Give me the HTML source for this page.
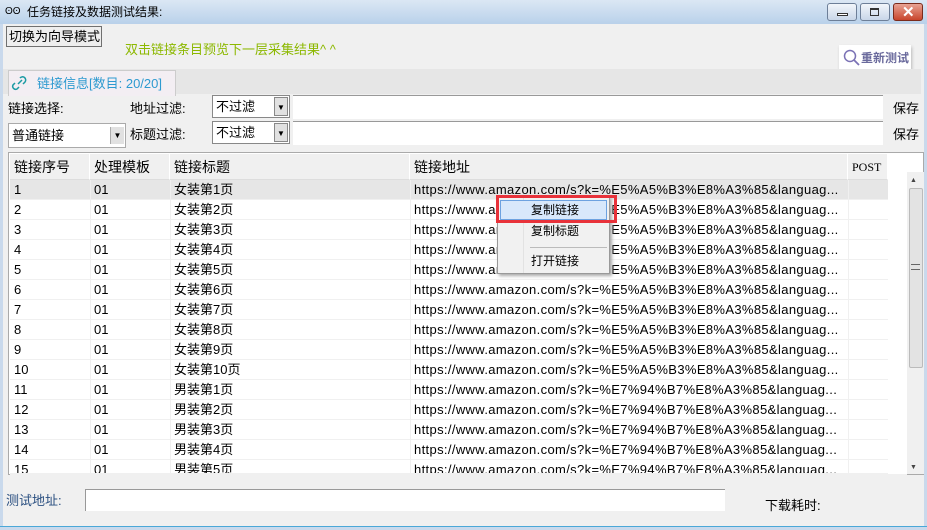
<!DOCTYPE html>
<html><head><meta charset="utf-8"><style>
*{box-sizing:border-box;margin:0;padding:0}
body{width:927px;height:530px;overflow:hidden;background:#f0f0f0;font-family:"Liberation Sans","Noto Sans CJK SC",sans-serif;font-size:13px;color:#000;position:relative}
.a{position:absolute;white-space:nowrap;line-height:16px}
.tb{left:0;top:0;width:927px;height:24px;background:linear-gradient(#dbe7f4,#b9d1ea)}
.wb{position:absolute;top:3px;height:18px;border:1px solid #6d7f98;border-radius:3px;background:linear-gradient(#f2f6fb,#c8d6e8)}
.cb{width:14px;height:16px;border-left:1px solid #acacac;background:#e1e1e1;}
.row{position:absolute;left:10px;width:878px;height:20px;border-bottom:1px solid #f0f0f0;background:#fff}
.row span{position:absolute;top:2px;font-size:13px;line-height:16px;white-space:nowrap}
.hd{position:absolute;top:154px;height:26px;background:#f0f0f0;border-right:1px solid #fff;border-bottom:1px solid #ddd;padding:4px 0 0 4px;font-size:14px;line-height:18px}
</style></head><body>
<div class="a tb"></div>
<div class="a" style="left:5px;top:4px;font-size:10px">ʘʘ</div>
<div class="a" style="left:27px;top:4px;font-size:12px">任务链接及数据测试结果:</div>
<div class="wb" style="left:827px;width:30px"><div style="position:absolute;left:9px;top:9px;width:11px;height:3px;border:1px solid #333;background:#fff"></div></div>
<div class="wb" style="left:860px;width:30px"><div style="position:absolute;left:9px;top:4px;width:9px;height:8px;border:1px solid #333;border-top-width:2px"></div></div>
<div class="wb" style="left:893px;width:30px;background:linear-gradient(#e8a393,#c8452c);border-color:#7a2b1c"><div style="position:absolute;left:8px;top:-1px;color:#fff;font-weight:bold;font-size:15px">✕</div></div>
<div class="a" style="left:0;top:24px;width:3px;height:506px;background:#c9d9ec"></div>
<div class="a" style="left:924px;top:24px;width:3px;height:506px;background:#c9d9ec"></div>
<div class="a" style="left:0;top:526px;width:927px;height:4px;background:#c9d9ec;border-top:1px solid #4aa8d8"></div>

<div class="a" style="left:6px;top:26px;width:96px;height:21px;border:1px solid #707070;background:#eee;font-size:13px;padding:2px 0 0 2px">切换为向导模式</div>
<div class="a" style="left:125px;top:42px;color:#8cb800;font-size:13px">双击链接条目预览下一层采集结果^ ^</div>
<div class="a" style="left:839px;top:45px;width:72px;height:25px;background:#fff;box-shadow:1px 2px 3px #bbb"><svg width="18" height="18" style="position:absolute;left:4px;top:4px"><circle cx="7" cy="7" r="5.5" fill="none" stroke="#7b72b5" stroke-width="1.5"/><line x1="11" y1="11" x2="16" y2="16" stroke="#7b72b5" stroke-width="1.8"/></svg><span style="position:absolute;left:22px;top:5px;font-size:12px;color:#6a6a9c;font-weight:bold">重新测试</span></div>

<div class="a" style="left:3px;top:69px;width:918px;height:25px;background:#e6e6e6"></div>
<div class="a" style="left:8px;top:70px;width:168px;height:26px;background:#f3eef3;border:1px solid #ccc;border-bottom:none"></div>
<svg class="a" style="left:11px;top:74px" width="18" height="18"><path d="M7 10 L11 6 M9 4 a3 3 0 0 1 5 4 l-2 2 M8 13 l-2 2 a3 3 0 0 1 -4 -4 l2 -2" stroke="#1b9aa3" stroke-width="1.5" fill="none"/></svg>
<div class="a" style="left:37px;top:76px;color:#2e9ad0;font-size:13px">链接信息[数目: 20/20]</div>

<div class="a" style="left:8px;top:101px">链接选择:</div>
<div class="a" style="left:130px;top:101px">地址过滤:</div>
<div class="a" style="left:130px;top:127px">标题过滤:</div>
<div class="a" style="left:8px;top:123px;width:118px;height:25px;background:#fff;border:1px solid #aaa;padding:4px 0 0 3px">普通链接<div class="cb" style="position:absolute;right:1px;top:3px;height:17px;font-size:8px;text-align:center;line-height:17px">▼</div></div>
<div class="a" style="left:212px;top:95px;width:78px;height:23px;background:#fff;border:1px solid #888;padding:3px 0 0 3px">不过滤<div class="cb" style="position:absolute;right:1px;top:1px;height:19px;font-size:8px;text-align:center;line-height:19px;border:1px solid #888">▼</div></div>
<div class="a" style="left:212px;top:121px;width:78px;height:23px;background:#fff;border:1px solid #888;padding:3px 0 0 3px">不过滤<div class="cb" style="position:absolute;right:1px;top:1px;height:19px;font-size:8px;text-align:center;line-height:19px;border:1px solid #888">▼</div></div>
<div class="a" style="left:293px;top:95px;width:590px;height:24px;background:#fff;border-top:1px solid #999"></div>
<div class="a" style="left:293px;top:121px;width:590px;height:24px;background:#fff;border-top:1px solid #999"></div>
<div class="a" style="left:893px;top:101px">保存</div>
<div class="a" style="left:893px;top:127px">保存</div>

<div class="a" style="left:8px;top:152px;width:916px;height:323px;background:#fff;border:1px solid #aaa"></div>
<div class="hd" style="left:10px;width:80px">链接序号</div>
<div class="hd" style="left:90px;width:80px">处理模板</div>
<div class="hd" style="left:170px;width:240px">链接标题</div>
<div class="hd" style="left:410px;width:438px">链接地址</div>
<div class="hd" style="left:848px;width:40px;font-family:'Liberation Serif',serif;font-size:12px;padding-top:4px">POST</div>

<div id="rows"></div>
<div class="a" style="left:10px;top:474px;width:897px;height:2px;background:#f0f0f0"></div>

<div class="a" style="left:907px;top:172px;width:17px;height:302px;background:#f0f0f0"></div>
<div class="a" style="left:910px;top:173px;font-size:7px;color:#444">▲</div>
<div class="a" style="left:909px;top:188px;width:14px;height:180px;background:#e3e3e3;border:1px solid #bbb;border-radius:2px"></div>
<div class="a" style="left:911px;top:264px;width:9px;height:6px;border-top:1px solid #666;border-bottom:1px solid #666"></div>
<div class="a" style="left:910px;top:460px;font-size:7px;color:#444">▼</div>

<div class="a" style="left:497px;top:196px;width:113px;height:78px;background:#f1f1f1;border:1px solid #999;box-shadow:2px 2px 3px #aaa"></div>
<div class="a" style="left:523px;top:197px;width:1px;height:76px;background:#e2e2e2"></div>
<div class="a" style="left:500px;top:200px;width:107px;height:20px;background:#d8e8fb;border:1px solid #6da2e0"></div>
<div class="a" style="left:496px;top:195px;width:121px;height:28px;border:3px solid #e8323a"></div>
<div class="a" style="left:531px;top:202px;font-size:12px">复制链接</div>
<div class="a" style="left:531px;top:223px;font-size:12px">复制标题</div>
<div class="a" style="left:530px;top:247px;width:77px;height:1px;background:#bbb"></div>
<div class="a" style="left:531px;top:253px;font-size:12px">打开链接</div>

<div class="a" style="left:6px;top:493px;color:#2a4f80">测试地址:</div>
<div class="a" style="left:85px;top:489px;width:640px;height:22px;background:#fff;border-top:1px solid #999;border-left:1px solid #999"></div>
<div class="a" style="left:765px;top:498px">下载耗时:</div>

<script>
(function(){
var h='',t=['女装第1页','女装第2页','女装第3页','女装第4页','女装第5页','女装第6页','女装第7页','女装第8页','女装第9页','女装第10页','男装第1页','男装第2页','男装第3页','男装第4页','男装第5页'];
for(var i=0;i<15;i++){var u=i<10?'%E5%A5%B3':'%E7%94%B7';var tp=180+i*20;var ht=i==14?14:20;
h+='<div class="row" style="top:'+tp+'px;height:'+ht+'px;overflow:hidden;'+(i==0?'background:#e6e6e6;':'')+'"><span style="left:4px">'+(i+1)+'</span><span style="left:84px">01</span><span style="left:164px">'+t[i]+'</span><span style="left:404px;letter-spacing:0.35px">https://www.amazon.com/s?k='+u+'%E8%A3%85&amp;languag...</span>'+
'<i style="position:absolute;left:80px;top:0;width:1px;height:20px;background:#f0f0f0"></i><i style="position:absolute;left:160px;top:0;width:1px;height:20px;background:#f0f0f0"></i><i style="position:absolute;left:400px;top:0;width:1px;height:20px;background:#f0f0f0"></i><i style="position:absolute;left:838px;top:0;width:1px;height:20px;background:#f0f0f0"></i></div>';}
document.getElementById('rows').innerHTML=h;
})();
</script>
</body></html>
